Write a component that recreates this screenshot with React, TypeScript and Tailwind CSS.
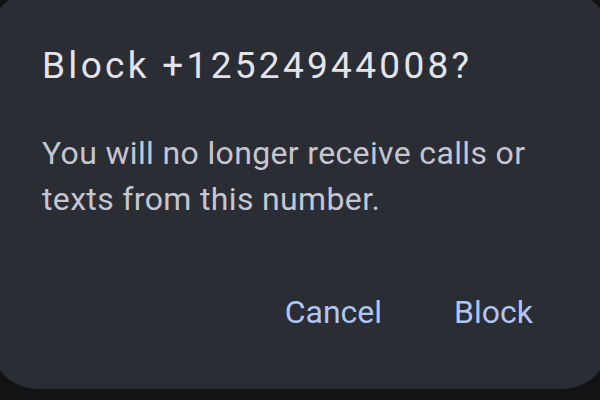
export default function App() {
  return (
    <div className="w-[600px] h-[400px] overflow-hidden bg-[#131316] font-['Roboto',sans-serif]">
      <div className="-ml-[10px] -mt-[10px] w-[620px] h-[399px] rounded-[48px] bg-[#2b2d35] flex flex-col pl-[52px] pr-[52px] pt-[54px]">
        <h1 className="text-[37px] leading-[44px] tracking-[3.3px] text-[#e3e4ea] font-normal">
          Block +12524944008?
        </h1>
        <p className="mt-[42px] text-[32px] leading-[46px] tracking-[0.35px] text-[#c5c6d0]">
          You will no longer receive calls or texts from this number.
        </p>
        <div className="mt-[67px] pr-[25px] flex justify-end gap-[72px] text-[32px] leading-[46px] text-[#afc6f3]">
          <button>Cancel</button>
          <button>Block</button>
        </div>
      </div>
    </div>
  );
}
